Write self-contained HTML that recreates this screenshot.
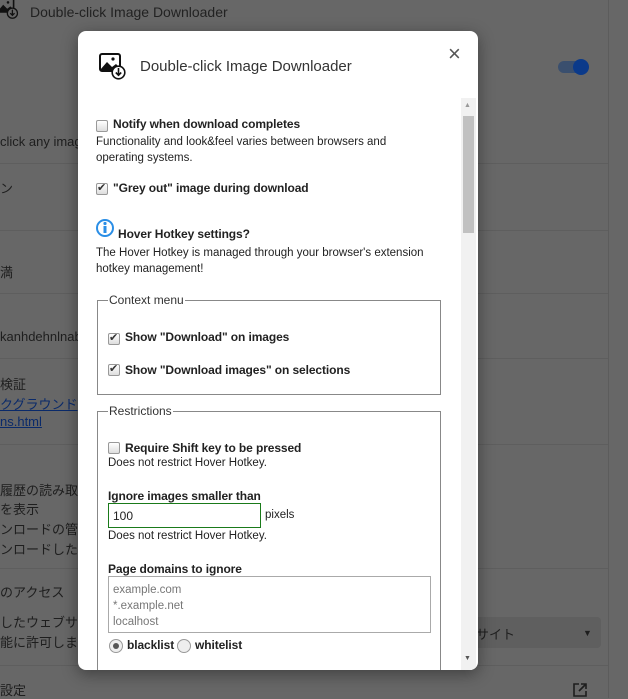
<!DOCTYPE html>
<html><head><meta charset="utf-8"><style>
*{box-sizing:border-box}
body{margin:0;width:628px;height:698px;overflow:hidden;background:#676767;font-family:"Liberation Sans","Noto Sans CJK JP",sans-serif;position:relative;color:#222}
.bg{position:absolute;color:#1e1e1e;font-size:13px}
.line{position:absolute;left:0;width:608px;height:1px;background:#5e5e5e}
.dlg{position:absolute;left:78px;top:31px;width:400px;height:639px;background:#fff;border-radius:8px;box-shadow:0 4px 16px rgba(0,0,0,.4);overflow:hidden}
.t{position:absolute;font-size:12px}
.b{font-weight:bold;font-size:12px;letter-spacing:-0.1px}
.cb{position:absolute;width:12px;height:12px;border:1px solid #999;border-radius:2px;background:linear-gradient(#fff,#ddd)}
.ck::after{content:"✔";position:absolute;left:0;top:-3px;font-size:11px;color:#333}
fieldset{position:absolute;border:1px solid #888;margin:0;padding:0}
legend{font-size:12px;color:#333;padding:0 1px;margin-left:10px}
</style></head><body>
<div style="position:absolute;left:608px;top:0;width:1px;height:698px;background:#5c5c5c"></div>
<svg style="position:absolute;left:-4px;top:-6px" width="24" height="28" viewBox="0 0 30 30"><rect x="2" y="3" width="20" height="17" rx="2" fill="#666" stroke="#111" stroke-width="2"/><path d="M2 19l7-8 5 5 4-3 4 4v3H2z" fill="#111"/><circle cx="15" cy="8" r="1.6" fill="#111"/><circle cx="20.5" cy="21.5" r="6.3" fill="#666" stroke="#111" stroke-width="1.6"/><path d="M20.5 17v7M17.8 21.5l2.7 2.7 2.7-2.7" stroke="#111" stroke-width="1.6" fill="none"/></svg>
<div class="bg" style="left:30px;top:4px;font-size:14px;color:#222">Double-click Image Downloader</div>
<div style="position:absolute;left:558px;top:61px;width:26px;height:12px;border-radius:6px;background:#3a4f6e"></div>
<div style="position:absolute;left:573px;top:59px;width:16px;height:16px;border-radius:8px;background:#0b3a8a"></div>
<div class="bg" style="left:0;top:134px">click any imag</div>
<div class="line" style="top:163px"></div>
<div class="bg" style="left:0;top:178px">ン</div>
<div class="line" style="top:230px"></div>
<div class="bg" style="left:0;top:262px">満</div>
<div class="line" style="top:293px"></div>
<div class="bg" style="left:0;top:329px">kanhdehnlnab</div>
<div class="line" style="top:358px"></div>
<div class="bg" style="left:0;top:374px">検証</div>
<div class="bg" style="left:0;top:394px;color:#0a2a6a;text-decoration:underline">クグラウンド</div>
<div class="bg" style="left:0;top:414px;color:#0a2a6a;text-decoration:underline">ns.html</div>
<div class="line" style="top:444px"></div>
<div class="bg" style="left:0;top:480px">履歴の読み取り</div>
<div class="bg" style="left:0;top:499px">を表示</div>
<div class="bg" style="left:0;top:519px">ンロードの管理</div>
<div class="bg" style="left:0;top:539px">ンロードしたフ</div>
<div class="line" style="top:568px"></div>
<div class="bg" style="left:0;top:582px">のアクセス</div>
<div class="bg" style="left:0;top:612px">したウェブサ</div>
<div class="bg" style="left:0;top:632px">能に許可しま</div>
<div style="position:absolute;left:470px;top:617px;width:131px;height:31px;background:#5f5f5f;border-radius:4px"></div>
<div class="bg" style="left:476px;top:624px">サイト</div>
<div class="bg" style="left:583px;top:628px;font-size:9px">▼</div>
<div class="line" style="top:665px"></div>
<div class="bg" style="left:0;top:680px">設定</div>
<svg style="position:absolute;left:572px;top:682px" width="16" height="16"><path d="M7 2H2v12h12V9M9 2h5v5M14 2L7 9" stroke="#1e1e1e" stroke-width="1.6" fill="none"/></svg>

<div class="dlg">
<svg style="position:absolute;left:20px;top:20px" width="30" height="30" viewBox="0 0 30 30"><rect x="2" y="3" width="20" height="17" rx="2" fill="#fff" stroke="#111" stroke-width="2"/><path d="M2 19l7-8 5 5 4-3 4 4v3H2z" fill="#111"/><circle cx="15" cy="8" r="1.6" fill="#111"/><circle cx="20.5" cy="21.5" r="6.3" fill="#fff" stroke="#111" stroke-width="1.6"/><path d="M20.5 17v7M17.8 21.5l2.7 2.7 2.7-2.7" stroke="#111" stroke-width="1.6" fill="none"/></svg>
<div style="position:absolute;left:62px;top:27px;font-size:15px;color:#333">Double-click Image Downloader</div>
<div style="position:absolute;left:370px;top:10px;font-size:22px;color:#555">×</div>
<div style="position:absolute;left:383px;top:67px;width:15px;height:572px;background:#f1f1f1"></div>
<div style="position:absolute;left:385px;top:85px;width:11px;height:117px;background:#c1c1c1"></div>
<div style="position:absolute;left:386px;top:71px;font-size:7px;color:#999">▲</div>
<div style="position:absolute;left:386px;top:624px;font-size:7px;color:#555">▼</div>

<div class="cb" style="left:18px;top:89px"></div>
<div class="t b" style="left:35px;top:86px">Notify when download completes</div>
<div class="t" style="left:18px;top:103px;line-height:16px;font-size:11.5px">Functionality and look&amp;feel varies between browsers and<br>operating systems.</div>
<div class="cb ck" style="left:18px;top:152px"></div>
<div class="t b" style="left:35px;top:150px">"Grey out" image during download</div>
<svg style="position:absolute;left:18px;top:188px" width="18" height="18"><circle cx="9" cy="9" r="8" fill="#fff" stroke="#2a8ee6" stroke-width="2"/><rect x="7.5" y="7" width="3" height="7" fill="#2a8ee6"/><circle cx="9" cy="4.5" r="1.6" fill="#2a8ee6"/></svg>
<div class="t b" style="left:40px;top:196px">Hover Hotkey settings?</div>
<div class="t" style="left:18px;top:214px;line-height:16px;font-size:11.5px">The Hover Hotkey is managed through your browser's extension<br>hotkey management!</div>

<fieldset style="left:19px;top:262px;width:344px;height:102px"><legend>Context menu</legend></fieldset>
<div class="cb ck" style="left:30px;top:302px"></div>
<div class="t b" style="left:47px;top:299px">Show "Download" on images</div>
<div class="cb ck" style="left:30px;top:333px"></div>
<div class="t b" style="left:47px;top:332px">Show "Download images" on selections</div>

<fieldset style="left:19px;top:373px;width:344px;height:280px"><legend>Restrictions</legend></fieldset>
<div class="cb" style="left:30px;top:411px"></div>
<div class="t b" style="left:47px;top:410px">Require Shift key to be pressed</div>
<div class="t" style="left:30px;top:426px;font-size:11.5px">Does not restrict Hover Hotkey.</div>
<div class="t b" style="left:30px;top:458px">Ignore images smaller than</div>
<div style="position:absolute;left:30px;top:472px;width:153px;height:25px;border:1px solid #1a7a1a;font-size:12px;padding:5px 4px">100</div>
<div class="t" style="left:187px;top:478px;font-size:11.5px">pixels</div>
<div class="t" style="left:30px;top:499px;font-size:11.5px">Does not restrict Hover Hotkey.</div>
<div class="t b" style="left:30px;top:531px">Page domains to ignore</div>
<div style="position:absolute;left:30px;top:545px;width:323px;height:57px;border:1px solid #aaa;font-size:11.5px;color:#777;padding:5px 4px;line-height:16px">example.com<br>*.example.net<br>localhost</div>
<div style="position:absolute;left:31px;top:608px;width:14px;height:14px;border-radius:7px;border:1px solid #999;background:#eee"><div style="position:absolute;left:3px;top:3px;width:6px;height:6px;border-radius:3px;background:#555"></div></div>
<div class="t b" style="left:49px;top:607px">blacklist</div>
<div style="position:absolute;left:99px;top:608px;width:14px;height:14px;border-radius:7px;border:1px solid #999;background:#eee"></div>
<div class="t b" style="left:117px;top:607px">whitelist</div>
</div>
</body></html>
